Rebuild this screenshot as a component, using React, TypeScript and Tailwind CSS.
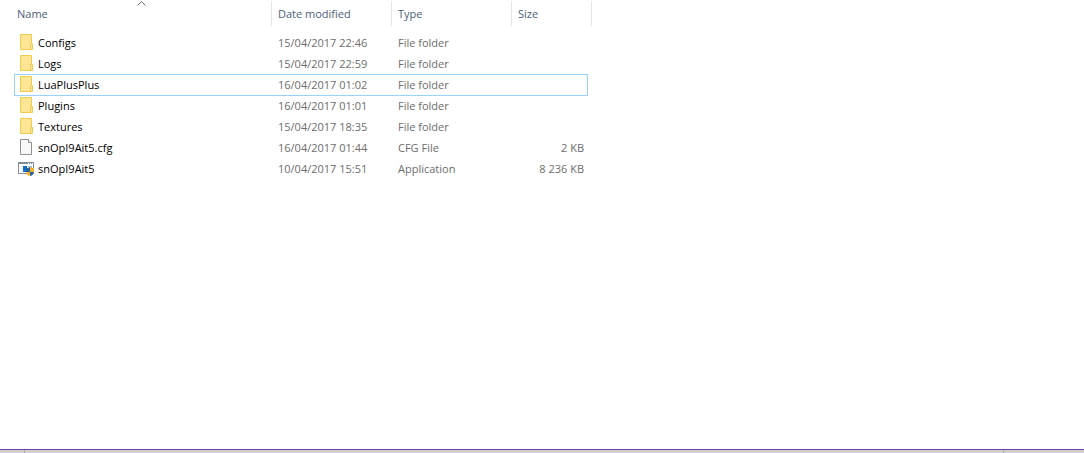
import { clsx } from "clsx";

type FileKind = "folder" | "file" | "app";

interface FileEntry {
  name: string;
  modified: string;
  type: string;
  size?: string;
  kind: FileKind;
}

const files: FileEntry[] = [
  { name: "Configs", modified: "15/04/2017 22:46", type: "File folder", kind: "folder" },
  { name: "Logs", modified: "15/04/2017 22:59", type: "File folder", kind: "folder" },
  { name: "LuaPlusPlus", modified: "16/04/2017 01:02", type: "File folder", kind: "folder" },
  { name: "Plugins", modified: "16/04/2017 01:01", type: "File folder", kind: "folder" },
  { name: "Textures", modified: "15/04/2017 18:35", type: "File folder", kind: "folder" },
  { name: "snOpI9Ait5.cfg", modified: "16/04/2017 01:44", type: "CFG File", size: "2 KB", kind: "file" },
  { name: "snOpI9Ait5", modified: "10/04/2017 15:51", type: "Application", size: "8 236 KB", kind: "app" },
];

const focusedFile = "LuaPlusPlus";

function FolderIcon() {
  return (
    <svg width="16" height="16" viewBox="0 0 16 16" aria-hidden="true">
      <path d="M2.5.5h11v15h-11z" fill="#ffe596" stroke="#efcb4f" />
      <path d="M12.5 9.5h2v6h-2z" fill="#ffe596" stroke="#efcb4f" />
    </svg>
  );
}

function BlankFileIcon() {
  return (
    <svg width="16" height="16" viewBox="0 0 16 16" aria-hidden="true">
      <path d="M2.5.5h8l3 3v12h-11z" fill="#f9f9f9" stroke="#8f8f8f" />
      <path d="M10.5.5v3h3" fill="#fff" stroke="#8f8f8f" />
    </svg>
  );
}

// Program window with the administrator shield in its corner
function AppIcon() {
  return (
    <svg width="16" height="16" viewBox="0 0 16 16" aria-hidden="true">
      <path d="M.5 2.5h15v11H.5z" fill="#fff" stroke="#838b91" />
      <path d="M0 2h16v2H0z" fill="#838b91" />
      <path d="M10 3h1v1h-1zM12 3h1v1h-1zM14 3h1v1h-1z" fill="#fff" />
      <path d="M2 6h2v1H2zM2 8h2v1H2zM2 10h2v1H2z" fill="#dfe5e9" />
      <path d="M5 6h4v6H5z" fill="#0f6fd0" />
      <path d="M10 6h4v2h-4z" fill="#8fc3f0" />
      <path d="M9 8h3V7h1v1h3v4c0 2-1 3-3 4h-1c-2-1-3-2-3-4z" fill="#fff" />
      <path d="M12 7h1l1 1h2v4h-4zM8 12h4v4c-2.500-.5-4-2-4-4z" fill="#f9b32b" />
      <path d="M12 7l-1 1H8v4h4zM12 12h4c0 2-1.500 3.500-4 4z" fill="#2a62a0" />
    </svg>
  );
}

function FileIcon({ kind }: { kind: FileKind }) {
  if (kind === "folder") return <FolderIcon />;
  if (kind === "file") return <BlankFileIcon />;
  return <AppIcon />;
}

function FileRow({ file }: { file: FileEntry }) {
  return (
    <tr
      className={clsx(
        "-mb-px grid h-[22px] w-[574px] grid-cols-[257px_120px_120px_75px] items-center border",
        file.name === focusedFile ? "border-[#99d1ff]" : "border-transparent"
      )}
    >
      <td className="flex items-center gap-1 pl-[3px] text-black">
        <span className="pb-0.5">
          <FileIcon kind={file.kind} />
        </span>
        {file.name}
      </td>
      <td className="pl-1.5">{file.modified}</td>
      <td className="pl-1.5">{file.type}</td>
      <td className="pr-[3px] text-right">{file.size}</td>
    </tr>
  );
}

export default function App() {
  return (
    <div className="flex min-h-screen flex-col bg-white font-['Open_Sans','Noto_Sans',sans-serif] text-[11px] leading-4 text-[#6d6d6d]">
      <main className="flex-1 pl-3.5 pt-px">
        <table className="block">
          <thead className="block text-[#4c607a]">
            <tr className="grid h-[25px] grid-cols-[258px_120px_120px_80px] text-left *:border-r *:border-[#e5e5e5] *:pt-[5px] *:font-normal">
              <th className="relative pl-[3px]" aria-sort="ascending">
                Name
                <svg
                  className="absolute left-[123px] top-0"
                  width="9"
                  height="5"
                  viewBox="0 0 9 5"
                  fill="none"
                  stroke="#6d6d6d"
                  aria-hidden="true"
                >
                  <path d="M.5 4.500l4-4 4 4" />
                </svg>
              </th>
              <th className="pl-1.5">Date modified</th>
              <th className="pl-1.5">Type</th>
              <th className="pl-1.5">Size</th>
            </tr>
          </thead>
          <tbody className="block pt-1.5">
            {files.map((file) => (
              <FileRow key={file.name} file={file} />
            ))}
          </tbody>
        </table>
      </main>
      <footer className="flex h-1 justify-between border-t border-[#7b3fa0] bg-[#d0d0d0]">
        <div className="w-[25px] border-r border-[#a8a8a8]" />
        <div className="w-[81px] border-l border-[#a8a8a8]" />
      </footer>
    </div>
  );
}
